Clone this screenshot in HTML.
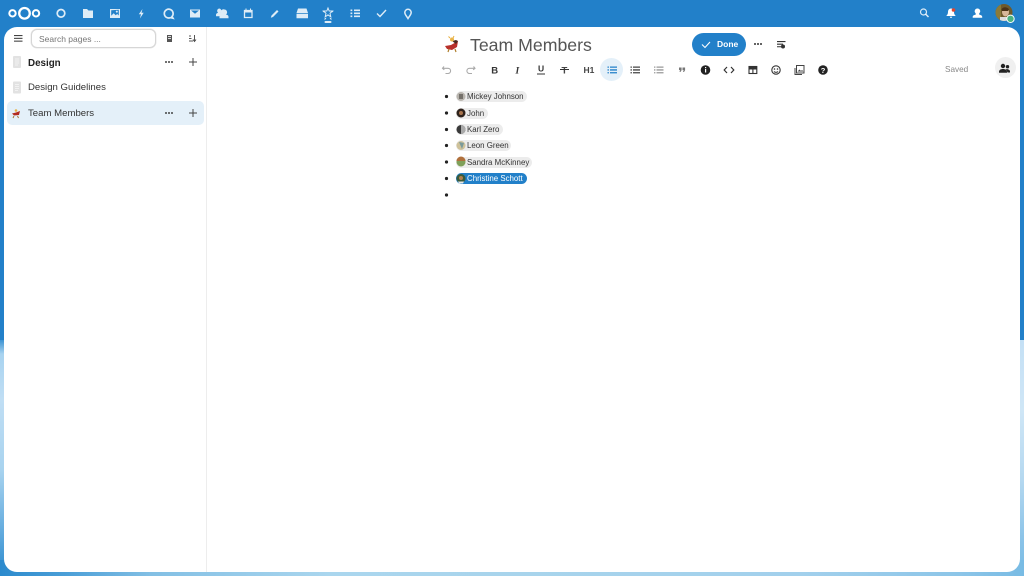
<!DOCTYPE html>
<html><head><meta charset="utf-8"><title>Team Members</title>
<style>
html,body{margin:0;padding:0}
body{width:1024px;height:576px;overflow:hidden;position:relative;font-family:"Liberation Sans",sans-serif;background:#2280c9}
#bl{position:absolute;left:0;top:340px;width:8px;height:236px;background:linear-gradient(180deg,#3d93d3 0,#a8d3f0 14px,#c0def4 60px,#a8d3ef 130px,#5fa9dd 195px,#2b8acd 236px)}
#br{position:absolute;left:1016px;top:340px;width:8px;height:236px;background:linear-gradient(180deg,#c4e0f5 0,#cfe6f6 70px,#b4d8f0 140px,#8ac3e8 200px,#78bbe4 236px)}
#bb{position:absolute;left:0;top:560px;width:1024px;height:16px;background:linear-gradient(90deg,#2b8acd 0,#4da0d8 70px,#82bfe4 150px,#aad6ee 330px,#a8d4ec 520px,#a2d0ec 800px,#8cc5e8 960px,#78bbe4 1024px)}
#panel{position:absolute;left:4px;top:27px;width:1016px;height:545px;background:#fff;border-radius:13px}
#side{position:absolute;left:206px;top:27px;width:1px;height:545px;background:#ededed}
.t{position:absolute;white-space:nowrap;color:#222}
#search{position:absolute;left:31px;top:29px;height:17px;border:1px solid #d6d6d6;border-radius:6px;box-shadow:0 0 0 .5px #e8e8e8;background:#fff;font-size:8.5px;color:#767676;line-height:18px;padding-left:7px;box-sizing:content-box;width:116px}
#sel{position:absolute;left:7px;top:101px;width:197px;height:24px;background:#e4f0f9;border-radius:5px}
#done{position:absolute;left:692px;top:33px;width:54px;height:23px;background:#2280c9;border-radius:12px;color:#fff;font-size:8.5px;font-weight:bold;line-height:23px;text-indent:25px}
#lc{position:absolute;left:600px;top:58px;width:23px;height:23px;border-radius:50%;background:#e4f0f9}
#uc{position:absolute;left:995px;top:57px;width:21px;height:21px;border-radius:50%;background:#f0f0f0}
.chip{position:absolute;height:11px;border-radius:6px;background:#ececec;color:#333;font-size:7.9px;line-height:11px;padding-left:11px;white-space:nowrap;box-sizing:border-box}
.chip.on{background:#2280c9;color:#fff}
svg{position:absolute;left:0;top:0}
</style></head><body>
<div id="bl"></div><div id="br"></div><div id="bb"></div>
<div id="panel"></div><div id="side"></div>
<div id="sel"></div>
<div id="search">Search pages ...</div>
<div class="t" style="left:28px;top:56px;font-size:9.800px;font-weight:bold;line-height:12px;padding-top:0;transform:translateY(2px)">Design</div>
<div class="t" style="left:28px;top:81px;font-size:9.600px;line-height:12px;color:#333;transform:translateY(1px)">Design Guidelines</div>
<div class="t" style="left:28px;top:107px;font-size:9.600px;line-height:12px;color:#333;transform:translateY(1px)">Team Members</div>
<div class="t" style="left:470px;top:33px;font-size:17.700px;line-height:24px;color:#555">Team Members</div>
<div id="done">Done</div><div id="lc"></div><div id="uc"></div>
<div class="t" style="left:945px;top:65px;font-size:8.200px;line-height:10px;color:#888">Saved</div>
<div class="chip" style="left:456px;top:91px;width:71px;">Mickey Johnson</div>
<div class="chip" style="left:456px;top:108px;width:32px;">John</div>
<div class="chip" style="left:456px;top:124px;width:47px;">Karl Zero</div>
<div class="chip" style="left:456px;top:140px;width:55px;">Leon Green</div>
<div class="chip" style="left:456px;top:157px;width:76px;">Sandra McKinney</div>
<div class="chip on" style="left:456px;top:173px;width:71px;">Christine Schott</div>
<svg width="1024" height="576" viewBox="0 0 1024 576">
<g fill="none" stroke="#fff"><circle cx="12.500" cy="13.300" r="3.200" stroke-width="2"/><circle cx="24.500" cy="13.300" r="5.300" stroke-width="2.300"/><circle cx="36" cy="13.300" r="3.200" stroke-width="2"/></g>
<g fill="#fff" opacity=".85">
<circle cx="61" cy="13.300" r="3.800" fill="none" stroke="#fff" stroke-width="1.700"/>
<path d="M83 9h4l1.500 1.500H93v7.500H83z"/>
<path fill-rule="evenodd" d="M110 9h10v9h-10zM111.200 10.200v5.500l2.500-2.500 2 2 1.500-1.200 1.600 1.500v-5.800z"/><circle cx="116.800" cy="11.600" r="1"/>
<path d="M142.500 9l-3.700 5.200h2.200l-1.100 4.300 3.800-5.700h-2.200z"/>
<path fill="none" stroke="#fff" stroke-width="1.700" d="M172 16.500a4.400 4.400 0 1 0-1.500 1.100l2.500.6z"/>
<path fill-rule="evenodd" d="M190 9.500h10v8h-10zM191 10.500l4 3.200 4-3.200z"/>
<path d="M219 8.500a2.400 2.400 0 0 1 1.500 4.200c1.200.4 2 1 2 2v1.500h-6.500v-1.500c0-1 .8-1.600 2-2a2.400 2.400 0 0 1 1-4.200zM224.500 9.500a2.800 2.800 0 0 1 1.500 5c1.400.4 2.500 1 2.500 2.200v1.500h-9v-1.500c0-1.200 1.100-1.800 2.500-2.200a2.800 2.800 0 0 1 2.500-5z"/>
<path fill="none" stroke="#fff" stroke-width="1.300" d="M244.500 10.500h7.500v7h-7.500z"/><path d="M244 10h8.500v2.500h-8.500zM245.500 8.500h1v2h-1zM250 8.500h1v2h-1z"/>
<path d="M271.500 15.500l5.500-5.500 1.500 1.500-5.500 5.500-2.200.7z"/>
<path d="M298 8.500h8.500l1.500 4.500h-11.500zM296.500 13.800h11.500v4.500h-11.500z"/>
<path fill="none" stroke="#fff" stroke-width="1" d="M328 8l1.200 3h3.300l-2.500 2.300.8 3.500-2.800-1.900-2.800 1.900.8-3.500-2.500-2.300h3.300z"/><path d="M323.500 10.500l-1 1 2 1.300zM332.500 10.500l1 1-2 1.300zM325 18l-1 1.500h1.500l1-1.700zM331 18l1 1.500h-1.500l-1-1.700z"/>
<rect x="324.500" y="21" width="7" height="2" rx="1"/>
<path d="M350.500 9.500h1.800v1.600h-1.800zM354 9.500h6v1.600h-6zM350.500 12.500h1.800v1.600h-1.800zM354 12.500h6v1.600h-6zM350.500 15.500h1.800v1.600h-1.800zM354 15.500h6v1.600h-6z"/>
<path fill="none" stroke="#fff" stroke-width="1.400" d="M377 13.500l3 3 6-6.500"/>
<path fill="none" stroke="#fff" stroke-width="1.500" d="M408 18.500c-1.500-2.500-3.200-4-3.200-6a3.200 3.200 0 0 1 6.400 0c0 2-1.700 3.500-3.200 6z"/>
</g>
<g fill="#fff">
<circle cx="923.500" cy="12" r="3" fill="none" stroke="#fff" stroke-width="1.200" opacity=".85"/><path d="M925.500 14l3 3" stroke="#fff" stroke-width="1.500" opacity=".85"/>
<path d="M951 8.500c2 0 3 1.500 3 3.500 0 2 .8 3 1.800 4h-9.600c1-1 1.800-2 1.800-4 0-2 1-3.500 3-3.500zM949.800 16.700h2.400a1.200 1.200 0 0 1-2.400 0z"/>
<circle cx="953.500" cy="10" r="1.800" fill="#e0442e"/>
<path d="M977.500 8.500a2.700 2.700 0 0 1 1.700 4.800v1.300c1.800.4 3 1 3 2v1.200h-9.500v-1.200c0-1 1.200-1.600 3-2v-1.300a2.700 2.700 0 0 1 1.800-4.800z"/>
</g>
<defs><clipPath id="av"><circle cx="1004" cy="12.500" r="8.500"/></clipPath></defs>
<circle cx="1004" cy="12.500" r="8.500" fill="#6e5a2c"/>
<g clip-path="url(#av)"><rect x="995" y="4" width="6" height="18" fill="#8a7a3a"/><ellipse cx="1005.500" cy="12" rx="3.500" ry="4.500" fill="#d8b79a"/><path d="M1001.500 9.500c1-3 6-3 7.500 0l-1 1.500h-6z" fill="#4a3218"/><rect x="1000" y="17" width="11" height="5" fill="#ddd"/></g>
<circle cx="1010.500" cy="18.800" r="3.700" fill="#49b382" stroke="#fff" stroke-width="1"/>
<g fill="#444">
<rect x="14" y="35" width="8.500" height="1.100"/><rect x="14" y="37.800" width="8.500" height="1.100"/><rect x="14" y="40.600" width="8.500" height="1.100"/>
<path d="M167 35h5v7h-5z" fill="#555"/><rect x="168" y="36" width="3" height="1" fill="#ddd"/><rect x="168" y="38" width="3" height="1" fill="#ddd"/>
<path d="M189 35.500h2v1h-2zM189 38h2.500v1h-2.500zM189 40.500h4v1h-4z" fill="#555"/><path d="M194.500 35v5.500M193 39.500l1.500 2 1.500-2" stroke="#444" fill="none" stroke-width=".9"/>
<circle cx="166" cy="62" r="1"/><circle cx="169" cy="62" r="1"/><circle cx="172" cy="62" r="1"/>
<circle cx="166" cy="113" r="1"/><circle cx="169" cy="113" r="1"/><circle cx="172" cy="113" r="1"/>
<path d="M189 61.500h3.500v-3.500h1v3.500h3.500v1h-3.500v3.500h-1v-3.500h-3.500zM189 112.500h3.500v-3.500h1v3.500h3.500v1h-3.500v3.500h-1v-3.500h-3.500z"/>
</g>
<rect x="13" y="56" width="8" height="12" rx="1" fill="#e2e2e2"/><path d="M15 59h4M15 61h4M15 63h4M15 65h3" stroke="#f7f7f7" stroke-width=".8"/>
<rect x="13" y="81.500" width="8" height="12" rx="1" fill="#e2e2e2"/><path d="M15 84.500h4M15 86.500h4M15 88.500h4M15 90.500h3" stroke="#f7f7f7" stroke-width=".8"/>
<path d="M12 113.500l4-1 4-1.500-1 4-5 .5z" fill="#b22b20"/><circle cx="16" cy="110.500" r="1.300" fill="#e8b040"/><path d="M14 116l-1 2M17.500 116l1 2" stroke="#a0702a" stroke-width=".9"/>
<path d="M445 46l6-1 7-4-1 6-5 3-5-1z" fill="#b8302a"/><path d="M452 41l4 3 2-3-2-1z" fill="#4a2a20"/>
<circle cx="452" cy="39.500" r="2" fill="#eab54a"/><path d="M450 38l-1.500-1.500M453 38l1-2" stroke="#e8b040" stroke-width="1"/><path d="M449 49l-1 3M455 49l1 3" stroke="#b0802e" stroke-width="1.200"/>
<path d="M702 44.500l3 3 5-5.500" fill="none" stroke="#fff" stroke-width="1.100"/>
<g fill="#333"><circle cx="755" cy="44" r="1"/><circle cx="758" cy="44" r="1"/><circle cx="761" cy="44" r="1"/>
<path d="M777 41h8.500v1.100h-8.500zM777 43.600h6v1.100h-6zM777 46.200h4v1.100h-4z"/><circle cx="783" cy="46.500" r="2"/></g>
<g fill="none" stroke="#aaa" stroke-width="1.100">
<path d="M444 66.500l-1.500 1.800 1.800 1.500M443 68.300h5a2.600 2.600 0 0 1 0 5.200h-2.500"/>
<path d="M473.500 66.500l1.500 1.800-1.800 1.500M474.500 68.300h-5a2.600 2.600 0 0 0 0 5.200h2.500"/>
</g>
<g fill="#333" font-family="Liberation Sans, sans-serif">
<text x="491.300" y="73.300" font-size="9.500" font-weight="bold">B</text>
<text x="515.500" y="73.300" font-size="9.500" font-weight="bold" font-style="italic" font-family="Liberation Serif, serif">I</text>
<text x="538" y="71.500" font-size="8.500" font-weight="bold">U</text><rect x="537" y="73.500" width="8" height="1"/>
<text x="561.500" y="73.300" font-size="9.500" font-weight="bold" fill="#444">T</text><rect x="560" y="69" width="9" height="1"/>
<text x="583.500" y="73" font-size="8.500" font-weight="bold" fill="#444">H1</text>
</g>
<g fill="#2280c9"><path d="M607.500 66.500h1.400v1.300h-1.400zM610 66.500h7v1.300h-7zM607.500 69.300h1.400v1.300h-1.400zM610 69.300h7v1.300h-7zM607.500 72.100h1.400v1.300h-1.400zM610 72.100h7v1.300h-7z"/></g>
<g fill="#444"><path d="M630.500 66.500h1.400v1.300h-1.400zM633 66.500h7v1.300h-7zM630.500 69.300h1.400v1.300h-1.400zM633 69.300h7v1.300h-7zM630.500 72.100h1.400v1.300h-1.400zM633 72.100h7v1.300h-7z"/></g>
<g fill="#999"><path d="M654 66.500h1.400v1.300h-1.400zM656.500 66.500h7v1.300h-7zM654 69.300h1.400v1.300h-1.400zM656.500 69.300h7v1.300h-7zM654 72.100h1.400v1.300h-1.400zM656.500 72.100h7v1.300h-7z"/></g>
<path d="M679 67.500h2.600v2.600l-1 1.800h-1.200l.8-1.800h-1.200zM682.500 67.500h2.600v2.600l-1 1.800h-1.200l.8-1.800h-1.200z" fill="#777"/>
<circle cx="705.500" cy="70" r="4.800" fill="#222"/><rect x="705" y="69" width="1.200" height="3.500" fill="#fff"/><rect x="705" y="67" width="1.200" height="1.200" fill="#fff"/>
<path d="M727 67l-2.800 3 2.800 3M731 67l2.800 3-2.800 3" fill="none" stroke="#333" stroke-width="1.200"/>
<g fill="none" stroke="#333"><rect x="749" y="66.500" width="7.800" height="7" stroke-width="1.100"/><path d="M749 69h7.800M752.900 69v4.500" stroke-width="1.100"/></g><rect x="749" y="66.500" width="7.800" height="2.500" fill="#333"/>
<circle cx="776" cy="70" r="4.200" fill="none" stroke="#333" stroke-width="1.100"/><circle cx="774.500" cy="69" r=".8" fill="#333"/><circle cx="777.500" cy="69" r=".8" fill="#333"/><path d="M774 71.500c1 1.200 3 1.200 4 0" fill="none" stroke="#333"/>
<g fill="none" stroke="#444" stroke-width="1"><rect x="796.500" y="65.500" width="7.500" height="7.500"/><path d="M795 68v6.500h7"/></g><path d="M797.500 71.500l2-2 1.500 1.500 1-1 1.500 1.500z" fill="#444"/>
<circle cx="823" cy="70" r="4.800" fill="#222"/><text x="820.800" y="73" font-size="7.500" font-weight="bold" fill="#fff" font-family="Liberation Sans, sans-serif">?</text>
<g fill="#222"><circle cx="1003" cy="66" r="2.200"/><path d="M999 72c0-2 1.500-3 4-3s4 1 4 3v.8h-8z"/><circle cx="1007.500" cy="66.700" r="1.700"/><path d="M1006 69c2 0 4 .8 4 2.500v1h-2.500z"/></g>
<g fill="#222"><circle cx="446.500" cy="96.500" r="1.600"/><circle cx="446.500" cy="113" r="1.600"/><circle cx="446.500" cy="129.500" r="1.600"/><circle cx="446.500" cy="145.500" r="1.600"/><circle cx="446.500" cy="162" r="1.600"/><circle cx="446.500" cy="178.500" r="1.600"/><circle cx="446.500" cy="195" r="1.600"/></g>
<circle cx="461" cy="96.500" r="4.500" fill="#b8b4ae"/><rect x="459" y="94" width="4" height="5" fill="#74706a"/>
<circle cx="461" cy="113" r="4.500" fill="#2e221c"/><circle cx="461" cy="113" r="2" fill="#a8744e"/>
<circle cx="461" cy="129.500" r="4.500" fill="#3a3a3a"/><path d="M461 125v9a4.500 4.500 0 0 0 0-9z" fill="#aaa"/>
<circle cx="461" cy="145.500" r="4.500" fill="#cfc29a"/><path d="M459 142l3 7 2-6z" fill="#7a9a9a"/>
<circle cx="461" cy="162" r="4.500" fill="#7fa05a"/><path d="M456.500 161a4.500 4.500 0 0 1 9 0z" fill="#b0703c"/>
<circle cx="461" cy="178.500" r="4.500" fill="#3a5a3a"/><circle cx="461" cy="178" r="2" fill="#b08050"/><path d="M458 181.500h6l-1 2h-4z" fill="#e8e8e8"/>
</svg>
</body></html>
